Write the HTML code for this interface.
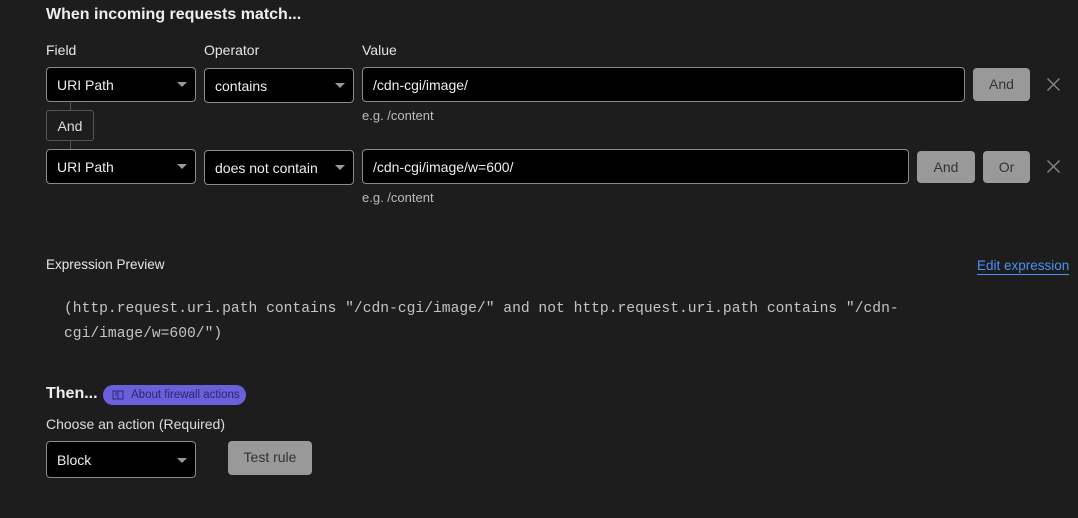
<!DOCTYPE html>
<html><head><style>
*{box-sizing:border-box;margin:0;padding:0}
body{width:1078px;height:518px;background:#1d1d1d;font-family:"Liberation Sans",sans-serif;color:#e6e6e6;position:relative;overflow:hidden;font-size:14px}
.a{position:absolute;white-space:nowrap}
.inp{position:absolute;background:#000;border:1px solid #8a8a8a;border-radius:4px;height:35px;line-height:35px;padding-left:10px;font-size:14px;color:#eee}
.car{position:absolute;right:8px;top:14px;width:0;height:0;border-left:5px solid transparent;border-right:5px solid transparent;border-top:5px solid #999}
.btn{position:absolute;background:#999;border-radius:4px;color:#333;text-align:center;font-size:14px}
.x{position:absolute}
.hint{position:absolute;font-size:13px;color:#bbb}
.code{position:absolute;left:64px;font-family:"Liberation Mono",monospace;font-size:14.65px;color:#c4c4c4;white-space:pre}
</style></head><body>
<div class="a" style="left:46px;top:6px;font-size:16px;font-weight:bold;color:#eee">When incoming requests match...</div>
<div class="a" style="left:46px;top:42px">Field</div>
<div class="a" style="left:204px;top:42px">Operator</div>
<div class="a" style="left:362px;top:42px">Value</div>

<div class="inp" style="left:46px;top:67px;width:150px">URI Path<span class="car"></span></div>
<div class="inp" style="left:204px;top:68px;width:150px">contains<span class="car"></span></div>
<div class="inp" style="left:362px;top:67px;width:603px">/cdn-cgi/image/</div>
<div class="btn" style="left:973px;top:68px;width:57px;height:33px;line-height:33px">And</div>
<svg class="x" style="left:1047px;top:78px" width="13" height="13"><path d="M0.5 0.5L12.5 12.5M12.5 0.5L0.5 12.5" stroke="#888" stroke-width="1.3"/></svg>
<div class="hint" style="left:362px;top:108px">e.g. /content</div>

<div style="position:absolute;left:70px;top:101px;width:1px;height:48px;background:#555"></div>
<div style="position:absolute;left:46px;top:110px;width:48px;height:31px;border:1px solid #555;border-radius:3px;background:#1d1d1d;line-height:31px;text-align:center;color:#ddd">And</div>

<div class="inp" style="left:46px;top:149px;width:150px">URI Path<span class="car"></span></div>
<div class="inp" style="left:204px;top:150px;width:150px">does not contain<span class="car"></span></div>
<div class="inp" style="left:362px;top:149px;width:547px">/cdn-cgi/image/w=600/</div>
<div class="btn" style="left:917px;top:151px;width:58px;height:32px;line-height:32px">And</div>
<div class="btn" style="left:983px;top:151px;width:47px;height:32px;line-height:32px">Or</div>
<svg class="x" style="left:1047px;top:160px" width="13" height="13"><path d="M0.5 0.5L12.5 12.5M12.5 0.5L0.5 12.5" stroke="#888" stroke-width="1.3"/></svg>
<div class="hint" style="left:362px;top:190px">e.g. /content</div>

<div class="a" style="left:46px;top:257px;font-size:13.5px">Expression Preview</div>
<div class="a" style="left:977px;top:257px;font-size:13.5px;color:#4d8ff5;border-bottom:1px solid #4d8ff5;line-height:17px">Edit expression</div>
<div class="code" style="top:301px">(http.request.uri.path contains "/cdn-cgi/image/" and not http.request.uri.path contains "/cdn-</div>
<div class="code" style="top:326px">cgi/image/w=600/")</div>

<div class="a" style="left:46px;top:385px;font-size:16px;font-weight:bold;color:#eee">Then...</div>
<div class="a" style="left:103px;top:385px;width:143px;height:20px;border-radius:10px;background:#6b60dc;font-size:11.5px;color:#2c2670;line-height:20px;padding-left:28px">About firewall actions</div>
<svg style="position:absolute;left:112px;top:389px" width="12" height="12" viewBox="0 0 12 12"><path d="M1 2h10v8H1z M6 2v8 M3 4h2 M3 6h2" stroke="#2c2670" fill="none" stroke-width="1"/></svg>
<div class="a" style="left:46px;top:416px;color:#ddd">Choose an action (Required)</div>
<div class="inp" style="left:46px;top:441px;width:150px;height:37px;line-height:37px">Block<span class="car" style="top:16px"></span></div>
<div class="btn" style="left:228px;top:441px;width:84px;height:34px;line-height:33px">Test rule</div>
</body></html>
